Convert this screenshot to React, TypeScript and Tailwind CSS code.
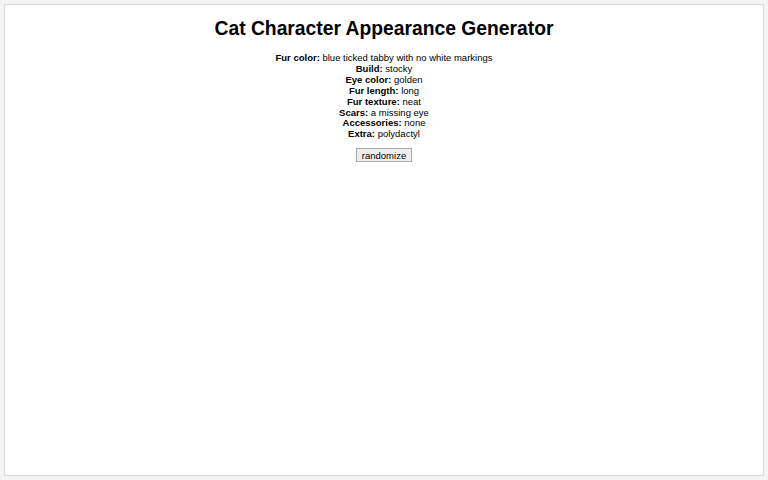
import React, { useState } from "react";

const traits: [string, string][] = [
  ["Fur color", "blue ticked tabby with no white markings"],
  ["Build", "stocky"],
  ["Eye color", "golden"],
  ["Fur length", "long"],
  ["Fur texture", "neat"],
  ["Scars", "a missing eye"],
  ["Accessories", "none"],
  ["Extra", "polydactyl"],
];

export default function App() {
  const [rows] = useState(traits);
  return (
    <div
      className="min-h-[480px] bg-[#f3f3f3] p-[4px] text-black"
      style={{ fontFamily: '"Liberation Sans", Arial, sans-serif' }}
    >
      <div className="h-[472px] border border-[#dcdcdc] bg-white flex flex-col items-center">
        <h1 className="mt-[12px] text-[19.3px] font-bold leading-[23px]">
          Cat Character Appearance Generator
        </h1>
        <div className="mt-[13px] flex flex-col items-center text-[9.5px] leading-[10.9px]">
          {rows.map(([k, v]) => (
            <div key={k}>
              <span className="font-bold">{k}:</span> {v}
            </div>
          ))}
        </div>
        <button className="mt-[8px] border border-[#a9a9a9] bg-[#efefef] px-[5px] text-[9.5px] leading-[11px] pt-[1px] pb-0">
          randomize
        </button>
      </div>
    </div>
  );
}
